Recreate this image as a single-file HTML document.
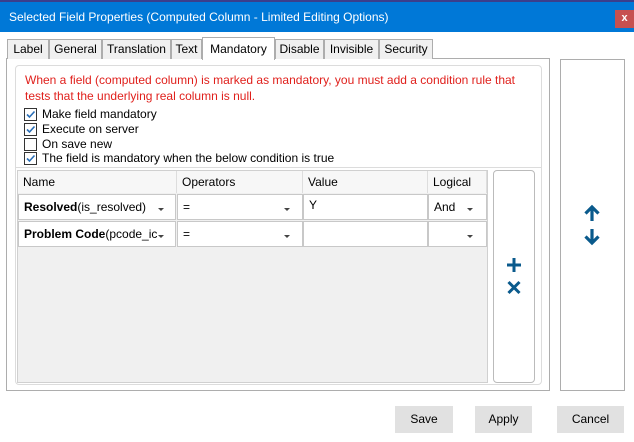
<html><head><style>
body{margin:0;width:634px;height:442px;background:#fff;font-family:"Liberation Sans",sans-serif;font-size:12px;color:#000;position:relative;overflow:hidden}
.a{position:absolute;box-sizing:border-box}
.tab{position:absolute;top:39px;height:20px;border:1px solid #adadad;border-bottom:none;background:#f0f0f0;font-size:12px;line-height:19px;text-align:center;box-sizing:border-box}
.cb{position:absolute;left:24px;width:13px;height:13px;border:1px solid #333;box-sizing:border-box;background:#fff}
.cb svg{position:absolute;left:0;top:0}
.lbl{position:absolute;left:42px;font-size:12px}
.cell{position:absolute;background:#fff;border:1px solid #c8c8c8;box-sizing:border-box;font-size:12px;line-height:24px;padding-left:5px}
.dd{position:absolute;width:0;height:0;border-left:3px solid transparent;border-right:3px solid transparent;border-top:3px solid #444}
.hd{position:absolute;top:171px;height:22px;line-height:22px;padding-left:5px;background:#f7f7f7;border-right:1px solid #ddd;box-sizing:border-box}
.btn{position:absolute;top:406px;height:27px;background:#e1e1e1;text-align:center;line-height:27px;font-size:12px}
</style></head><body>
<div class="a" style="left:0;top:0;width:634px;height:2px;background:#3b3f8c"></div>
<div class="a" style="left:0;top:2px;width:634px;height:30px;background:#0078d7;color:#fff;font-size:12px;line-height:30px;padding-left:9px">Selected Field Properties (Computed Column - Limited Editing Options)</div>
<div class="a" style="left:615px;top:10px;width:19px;height:18px;background:#c75050;color:#fff;font-size:11px;text-align:center;line-height:17px;font-weight:bold">x</div>

<div class="a" style="left:6px;top:58px;width:544px;height:333px;border:1px solid #adadad"></div>
<div class="tab" style="left:7px;width:42px">Label</div>
<div class="tab" style="left:49px;width:53px">General</div>
<div class="tab" style="left:102px;width:69px">Translation</div>
<div class="tab" style="left:171px;width:31px">Text</div>
<div class="tab" style="left:202px;top:37px;height:23px;width:73px;background:#fff;line-height:22px">Mandatory</div>
<div class="tab" style="left:275px;width:49px">Disable</div>
<div class="tab" style="left:324px;width:55px">Invisible</div>
<div class="tab" style="left:379px;width:54px">Security</div>

<div class="a" style="left:560px;top:59px;width:65px;height:332px;border:1px solid #adadad"></div>
<svg class="a" style="left:582px;top:204px" width="20" height="42" viewBox="0 0 20 42"><g fill="none" stroke="#0a5a8c" stroke-width="3.2"><path d="M10 17V3M3.5 9.5L10 3l6.5 6.5"/><path d="M10 25v14M3.5 32.5L10 39l6.5-6.5"/></g></svg>

<div class="a" style="left:15px;top:65px;width:527px;height:320px;border:1px solid #dcdcdc;border-radius:4px"></div>
<div class="a" style="left:25px;top:72px;color:#e0201c;font-size:12px;line-height:16px;width:510px">When a field (computed column) is marked as mandatory, you must add a condition rule that tests that the underlying real column is null.</div>
<div class="cb" style="top:108px"><svg width="11" height="11"><path d="M2 5.5l2.5 2.5L9.5 2.5" fill="none" stroke="#2a6fb8" stroke-width="1.6"/></svg></div><div class="lbl" style="top:107px">Make field mandatory</div>
<div class="cb" style="top:123px"><svg width="11" height="11"><path d="M2 5.5l2.5 2.5L9.5 2.5" fill="none" stroke="#2a6fb8" stroke-width="1.6"/></svg></div><div class="lbl" style="top:122px">Execute on server</div>
<div class="cb" style="top:138px"></div><div class="lbl" style="top:137px">On save new</div>
<div class="cb" style="top:152px"><svg width="11" height="11"><path d="M2 5.5l2.5 2.5L9.5 2.5" fill="none" stroke="#2a6fb8" stroke-width="1.6"/></svg></div><div class="lbl" style="top:151px">The field is mandatory when the below condition is true</div>
<div class="a" style="left:15px;top:167px;width:527px;height:1px;background:#dcdcdc"></div>

<div class="a" style="left:17px;top:170px;width:471px;height:213px;border:1px solid #d0d0d0;background:#f0f0f0"></div>
<div class="hd" style="left:18px;width:159px">Name</div>
<div class="hd" style="left:177px;width:126px">Operators</div>
<div class="hd" style="left:303px;width:125px">Value</div>
<div class="hd" style="left:428px;width:59px">Logical</div>

<div class="cell" style="left:18px;top:194px;width:158px;height:26px"><b>Resolved</b>(is_resolved)</div><div class="dd" style="left:158px;top:208px"></div>
<div class="cell" style="left:177px;top:194px;width:126px;height:26px">=</div><div class="dd" style="left:284px;top:208px"></div>
<div class="cell" style="left:303px;top:194px;width:125px;height:26px;line-height:14px;padding-top:3px">Y</div>
<div class="cell" style="left:428px;top:194px;width:59px;height:26px">And</div><div class="dd" style="left:467px;top:208px"></div>
<div class="cell" style="left:18px;top:221px;width:158px;height:26px;overflow:hidden;white-space:nowrap;padding-right:20px"><b>Problem Code</b>(pcode_ic</div><div class="dd" style="left:158px;top:235px"></div>
<div class="cell" style="left:177px;top:221px;width:126px;height:26px">=</div><div class="dd" style="left:284px;top:235px"></div>
<div class="cell" style="left:303px;top:221px;width:125px;height:26px"></div>
<div class="cell" style="left:428px;top:221px;width:59px;height:26px"></div><div class="dd" style="left:467px;top:235px"></div>

<div class="a" style="left:493px;top:170px;width:42px;height:213px;border:1px solid #bbb;border-radius:4px;background:#fff"></div>
<svg class="a" style="left:505px;top:256px" width="18" height="40" viewBox="0 0 18 40"><g stroke="#0a5a8c" stroke-width="3" fill="none"><path d="M9 2v14M2 9h14"/><path d="M3.5 26l11 11M14.5 26l-11 11"/></g></svg>

<div class="btn" style="left:395px;width:58px">Save</div>
<div class="btn" style="left:475px;width:57px">Apply</div>
<div class="btn" style="left:557px;width:67px">Cancel</div>
</body></html>
